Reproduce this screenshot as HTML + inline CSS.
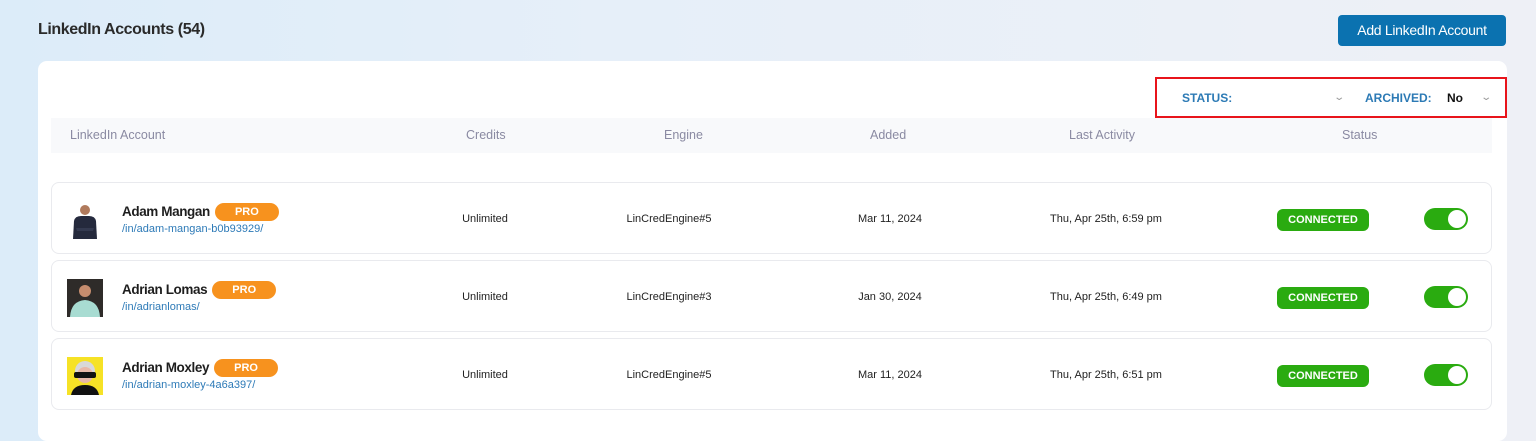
<!DOCTYPE html>
<html><head><style>
*{box-sizing:border-box;margin:0;padding:0}
body{width:1536px;height:410px;overflow:hidden;font-family:"Liberation Sans",sans-serif;background:linear-gradient(90deg,#dcecf9 0%,#e6eff9 40%,#eef0f6 100%);position:relative}
.title{position:absolute;left:38px;top:21px;font-size:16px;font-weight:bold;color:#2a2a2a;letter-spacing:-0.4px}
.btn{position:absolute;left:1338px;top:15px;width:168px;height:31px;background:#0b72b0;border-radius:4px;color:#fff;font-size:14px;text-align:center;line-height:31px;letter-spacing:-0.3px}
.card{position:absolute;left:38px;top:61px;width:1469px;height:380px;background:#fff;border-radius:9px}
.filter{position:absolute;left:1155px;top:77px;width:352px;height:41px;border:2px solid #e8141b}
.fl{position:absolute;top:91px;font-size:12px;font-weight:bold;color:#2c7ab5}
.chev{position:absolute;top:92px;font-size:10px;color:#999;transform:scaleX(1.4)}
.head{position:absolute;left:51px;top:118px;width:1441px;height:35px;background:#f8f9fb}
.h{position:absolute;top:128px;font-size:12.5px;color:#8a8aa2}
.row{position:absolute;left:51px;width:1441px;height:72px;border:1px solid #e9eaee;border-radius:8px;background:#fff}
.name{position:absolute;left:70px;top:20px;font-size:13.5px;font-weight:bold;color:#1e1e1e;letter-spacing:-0.4px}
.pro{display:inline-block;vertical-align:1px;margin-left:5px;width:64px;height:18px;border-radius:9px;background:#f7921e;color:#fff;font-size:11px;text-align:center;line-height:18px;font-weight:bold;letter-spacing:0}
.link{position:absolute;left:70px;top:40px;font-size:11px;color:#2d7ab7}
.c{position:absolute;top:30px;font-size:11px;color:#222;transform:translateX(-50%);white-space:nowrap}
.conn{position:absolute;left:1225px;top:26px;width:92px;height:22px;border-radius:6px;background:#2aab10;color:#fff;font-size:11px;font-weight:bold;text-align:center;line-height:22px}
.tog{position:absolute;left:1372px;top:25px;width:44px;height:22px;border-radius:11px;background:#2aab10}
.tog:after{content:"";position:absolute;right:2px;top:2px;width:18px;height:18px;border-radius:50%;background:#fff}
.av{position:absolute;left:15px;top:18px;width:36px;height:38px}
</style></head><body>
<div class="title">LinkedIn Accounts (54)</div>
<div class="btn">Add LinkedIn Account</div>
<div class="card"></div>
<div class="filter"></div>
<div class="fl" style="left:1182px">STATUS:</div>
<div class="chev" style="left:1335px">&#8964;</div>
<div class="fl" style="left:1365px">ARCHIVED:</div>
<div class="fl" style="left:1447px;color:#111">No</div>
<div class="chev" style="left:1482px">&#8964;</div>
<div class="head"></div>
<div class="h" style="left:70px">LinkedIn Account</div>
<div class="h" style="left:466px">Credits</div>
<div class="h" style="left:664px">Engine</div>
<div class="h" style="left:870px">Added</div>
<div class="h" style="left:1069px">Last Activity</div>
<div class="h" style="left:1342px">Status</div>

<div class="row" style="top:182px">
<svg class="av" viewBox="0 0 36 38"><circle cx="18" cy="9" r="5" fill="#b07a5c"/><path d="M6 38 L7 20 Q8 15 14 15 L22 15 Q28 15 29 20 L30 38Z" fill="#252a3d"/><path d="M9 27 L27 27 L26 30 L10 30Z" fill="#343a50"/></svg>
<div class="name">Adam Mangan<span class="pro">PRO</span></div>
<div class="link">/in/adam-mangan-b0b93929/</div>
<div class="c" style="left:433px">Unlimited</div>
<div class="c" style="left:617px">LinCredEngine#5</div>
<div class="c" style="left:838px">Mar 11, 2024</div>
<div class="c" style="left:1054px">Thu, Apr 25th, 6:59 pm</div>
<div class="conn">CONNECTED</div><div class="tog"></div>
</div>

<div class="row" style="top:260px">
<svg class="av" viewBox="0 0 36 38"><rect width="36" height="38" fill="#2e2b29"/><circle cx="18" cy="12" r="6" fill="#c58c6e"/><path d="M3 38 Q4 22 18 21 Q32 22 33 38Z" fill="#a8dcd2"/></svg>
<div class="name">Adrian Lomas<span class="pro">PRO</span></div>
<div class="link">/in/adrianlomas/</div>
<div class="c" style="left:433px">Unlimited</div>
<div class="c" style="left:617px">LinCredEngine#3</div>
<div class="c" style="left:838px">Jan 30, 2024</div>
<div class="c" style="left:1054px">Thu, Apr 25th, 6:49 pm</div>
<div class="conn">CONNECTED</div><div class="tog"></div>
</div>

<div class="row" style="top:338px">
<svg class="av" viewBox="0 0 36 38"><rect width="36" height="38" fill="#f6e226"/><circle cx="18" cy="14" r="10" fill="#d8d8d8"/><circle cx="18" cy="18" r="8" fill="#e8b8a8"/><rect x="7" y="15" width="22" height="6" rx="2" fill="#111"/><path d="M4 38 Q6 28 18 28 Q30 28 32 38Z" fill="#111"/></svg>
<div class="name">Adrian Moxley<span class="pro">PRO</span></div>
<div class="link">/in/adrian-moxley-4a6a397/</div>
<div class="c" style="left:433px">Unlimited</div>
<div class="c" style="left:617px">LinCredEngine#5</div>
<div class="c" style="left:838px">Mar 11, 2024</div>
<div class="c" style="left:1054px">Thu, Apr 25th, 6:51 pm</div>
<div class="conn">CONNECTED</div><div class="tog"></div>
</div>
</body></html>
